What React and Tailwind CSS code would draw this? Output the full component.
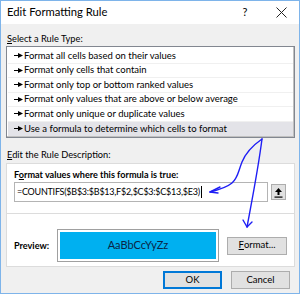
function RowArrow() {
  return (
    <svg width="9" height="5" viewBox="0 0 9 5" className="mr-[1px] shrink-0">
      <rect x="0" y="2" width="4" height="1" fill="#000" />
      <polygon points="4,0 9,2.5 4,5" fill="#000" />
    </svg>
  )
}

const rules = [
  'Format all cells based on their values',
  'Format only cells that contain',
  'Format only top or bottom ranked values',
  'Format only values that are above or below average',
  'Format only unique or duplicate values',
  'Use a formula to determine which cells to format',
]

function Btn({ children, primary }) {
  return (
    <div
      className={
        'flex h-[18px] w-[59px] items-center justify-center bg-[#e1e1e1] text-[9.5px] text-black ' +
        (primary ? 'border-2 border-[#0078d7]' : 'border border-[#adadad]')
      }
    >
      {children}
    </div>
  )
}

export default function App() {
  return (
    <div
      className="relative h-[294px] w-[300px] overflow-hidden border border-[#7eb4ea] bg-[#f0f0f0] text-[9.25px] text-black"
      style={{ fontFamily: 'Lato, "Noto Sans", sans-serif' }}
    >
      {/* title bar */}
      <div className="flex h-[23px] items-center bg-white pl-[6px] text-[11.25px]">
        <span className="flex-1">Edit Formatting Rule</span>
        <span className="w-[10px] text-center text-[11px]">?</span>
        <svg width="11" height="11" viewBox="0 0 11 11" className="ml-[26px] mr-[12px]">
          <path d="M0.5 0.5 L10.5 10.5 M10.5 0.5 L0.5 10.5" stroke="#222" strokeWidth="1" />
        </svg>
      </div>

      <div className="pl-[5px]">
        <div className="mt-[8px] h-[14px] pl-[1px] leading-[14px]">
          <span className="underline">S</span>elect a Rule Type:
        </div>

        <div className="h-[92px] w-[289px] border border-[#828790] bg-white px-[1px] pt-[2px] text-[9.5px] shadow-[inset_-1px_-1px_0_#c0c0c0]">
          {rules.map((r, i) => (
            <div
              key={r}
              className={
                'flex h-[14.5px] items-center whitespace-nowrap pl-[6px] leading-[14px] ' +
                (i === rules.length - 1 ? 'bg-[#e3e3e8]' : 'border-b border-[#f0f0f0]')
              }
            >
              <RowArrow />
              {r}
            </div>
          ))}
        </div>

        <div className="mt-[10px] h-[14px] pl-[1px] leading-[14px]">
          <span className="underline">E</span>dit the Rule Description:
        </div>

        <div className="mt-[1px] h-[104px] w-[289px] border border-[#dcdcdc] bg-white">
          <div className="h-[50px] border-b border-[#dcdcdc] pl-[7px] pt-[4px]">
            <div className="h-[14px] whitespace-nowrap text-[9.1px] font-bold leading-[14px]">
              F<span className="underline">o</span>rmat values where this formula is true:
            </div>
            <div className="flex items-center">
              <div className="flex h-[20px] w-[254px] items-center whitespace-nowrap border border-[#b4b4b4] bg-white pl-[2px] text-[9px] tracking-[-0.25px]">
                =COUNTIFS($B$3:$B$13,F$2,$C$3:$C$13,$E3)
                <span className="ml-[1px] h-[12px] w-[1px] bg-black" />
              </div>
              <div className="ml-[3px] flex h-[16px] w-[15px] items-center justify-center border border-[#adadad] bg-[#e1e1e1]">
                <svg width="9" height="11" viewBox="0 0 9 11">
                  <path d="M4.5 1 L8 5 L5.5 5 L5.5 8 L3.5 8 L3.5 5 L1 5 Z" fill="#000" />
                  <rect x="0.5" y="9.5" width="8" height="1.2" fill="#000" />
                </svg>
              </div>
            </div>
          </div>

          <div className="flex items-center pl-[7px] pt-[15px]">
            <div className="w-[43px] text-[9.1px] font-bold">Preview:</div>
            <div className="flex h-[33px] w-[162px] items-center justify-center border border-[#a0a0a0] bg-[#00b0f0] text-[11px] text-[#0b2545] outline-2 -outline-offset-3 outline-white">
              AaBbCcYyZz
            </div>
            <div className="ml-[8px] flex h-[18px] w-[60px] items-center justify-center border border-[#adadad] bg-[#e1e1e1] text-[9.5px]">
              <span className="underline">F</span>ormat...
            </div>
          </div>
        </div>

        <div className="mt-[4px] flex pl-[157px]">
          <Btn primary>OK</Btn>
          <div className="ml-[9px]">
            <Btn>Cancel</Btn>
          </div>
        </div>
      </div>

      {/* hand-drawn arrows */}
      <svg
        className="pointer-events-none absolute left-[-1px] top-[-1px]"
        width="300"
        height="294"
        viewBox="0 0 300 294"
      >
        <g fill="none" stroke="#1e1ef5" strokeWidth="1.4" strokeLinecap="round" strokeLinejoin="round">
          <path d="M262 139 C252 146 246 152 242 162 C238 172 238 178 232 183 C226 188 218 190 210 192" />
          <path d="M210 192 L220 187 M210 192 L218 193" />
          <path d="M262 139 C258 170 252 200 247 227" />
          <path d="M247 227 L243 220 M247 227 L252 222" />
        </g>
      </svg>
    </div>
  )
}
